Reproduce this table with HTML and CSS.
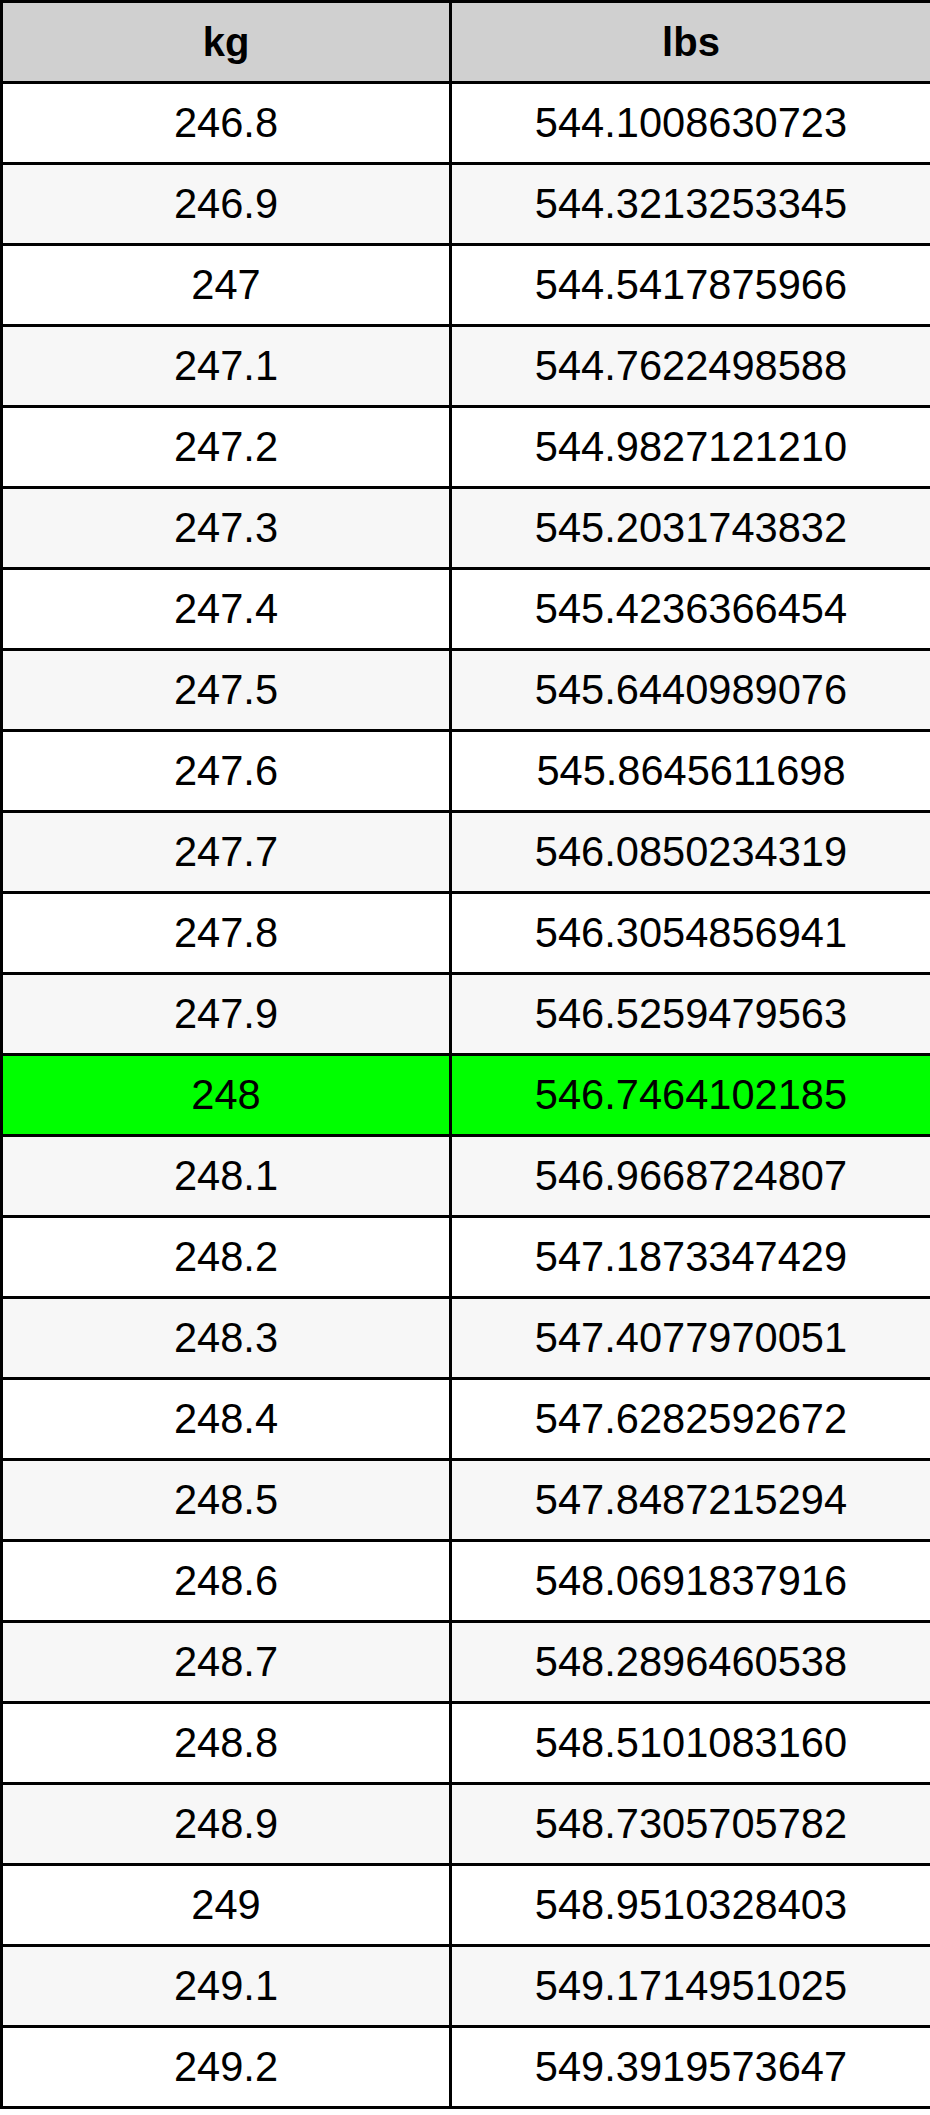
FILE: index.html
```html
<!DOCTYPE html>
<html>
<head>
<meta charset="utf-8">
<title>kg to lbs</title>
<link rel="stylesheet" href="styles.css">
</head>
<body>
<table class="conv">
<colgroup><col class="c1"><col class="c2"></colgroup>
<thead>
<tr><th>kg</th><th>lbs</th></tr>
</thead>
<tbody>
<tr><td>246.8</td><td>544.1008630723</td></tr>
<tr><td>246.9</td><td>544.3213253345</td></tr>
<tr><td>247</td><td>544.5417875966</td></tr>
<tr><td>247.1</td><td>544.7622498588</td></tr>
<tr><td>247.2</td><td>544.9827121210</td></tr>
<tr><td>247.3</td><td>545.2031743832</td></tr>
<tr><td>247.4</td><td>545.4236366454</td></tr>
<tr><td>247.5</td><td>545.6440989076</td></tr>
<tr><td>247.6</td><td>545.8645611698</td></tr>
<tr><td>247.7</td><td>546.0850234319</td></tr>
<tr><td>247.8</td><td>546.3054856941</td></tr>
<tr><td>247.9</td><td>546.5259479563</td></tr>
<tr class="hl"><td>248</td><td>546.7464102185</td></tr>
<tr><td>248.1</td><td>546.9668724807</td></tr>
<tr><td>248.2</td><td>547.1873347429</td></tr>
<tr><td>248.3</td><td>547.4077970051</td></tr>
<tr><td>248.4</td><td>547.6282592672</td></tr>
<tr><td>248.5</td><td>547.8487215294</td></tr>
<tr><td>248.6</td><td>548.0691837916</td></tr>
<tr><td>248.7</td><td>548.2896460538</td></tr>
<tr><td>248.8</td><td>548.5101083160</td></tr>
<tr><td>248.9</td><td>548.7305705782</td></tr>
<tr><td>249</td><td>548.9510328403</td></tr>
<tr><td>249.1</td><td>549.1714951025</td></tr>
<tr><td>249.2</td><td>549.3919573647</td></tr>
</tbody>
</table>
</body>
</html>
```
FILE: styles.css
```css
html, body {
  margin: 0;
  padding: 0;
  background: #ffffff;
}
.conv {
  border-collapse: collapse;
  table-layout: fixed;
  width: 930px;
  font-family: "Liberation Sans", Arial, Helvetica, sans-serif;
  color: #000;
}
.conv .c1 { width: 449px; }
.conv .c2 { width: 481px; }
.conv th, .conv td {
  border: 3px solid #000;
  padding: 0;
  height: 78px;
  text-align: center;
  vertical-align: middle;
  line-height: 1;
}
.conv th {
  background: #d0d0d0;
  font-weight: bold;
  font-size: 40px;
}
.conv td {
  font-size: 41.6px;
  font-weight: normal;
}
.conv tbody tr:nth-child(even) td {
  background: #f7f7f7;
}
.conv tbody tr.hl td {
  background: #00ff00;
}
```
